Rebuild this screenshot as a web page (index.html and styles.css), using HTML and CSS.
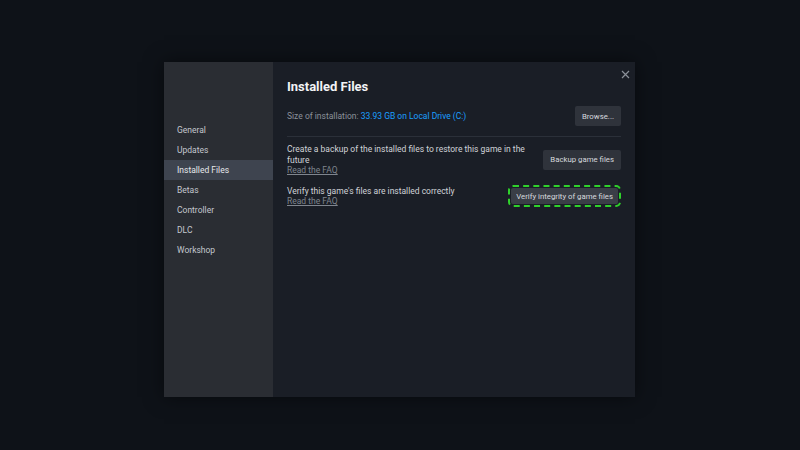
FILE: index.html
```html
<!DOCTYPE html>
<html lang="en">
<head>
  <meta charset="UTF-8" />
  <title>Properties - Installed Files</title>
  <link rel="stylesheet" href="styles.css">
</head>
<body>
  <div class="dialog">
    <nav class="sidebar">
      <div class="nav-item">General</div>
      <div class="nav-item">Updates</div>
      <div class="nav-item active">Installed Files</div>
      <div class="nav-item">Betas</div>
      <div class="nav-item">Controller</div>
      <div class="nav-item">DLC</div>
      <div class="nav-item">Workshop</div>
    </nav>
    <main class="content">
      <button class="close" aria-label="Close">
        <svg width="9" height="9" viewBox="0 0 9 9"><path d="M1 1L8 8M8 1L1 8" stroke="#8b9099" stroke-width="1.2"/></svg>
      </button>
      <h1>Installed Files</h1>
      <div class="row size-row">
        <div class="size">Size of installation: <span class="link">33.93 GB on Local Drive (C:)</span></div>
        <button class="btn">Browse...</button>
      </div>
      <div class="row">
        <div class="desc">
          <p>Create a backup of the installed files to restore this game in the future</p>
          <a class="faq" href="#">Read the FAQ</a>
        </div>
        <button class="btn">Backup game files</button>
      </div>
      <div class="row">
        <div class="desc">
          <p>Verify this game's files are installed correctly</p>
          <a class="faq" href="#">Read the FAQ</a>
        </div>
        <button class="btn verify">Verify integrity of game files</button>
      </div>
    </main>
  </div>
</body>
</html>
```

FILE: styles.css
```css
body {
  margin: 0;
  height: 450px;
  box-sizing: border-box;
  padding: 62px 0 0 164px;
  background: #0e1218;
  font-family: Roboto, "Noto Sans", sans-serif;
  color: #c3c7ce;
}

.dialog {
  width: 471px;
  height: 335px;
  display: flex;
  background: #1a1e26;
  box-shadow: 0 0 18px rgba(0,0,0,0.5);
}

.sidebar {
  flex: 0 0 109px;
  background: #2a2d33;
  padding-top: 58px;
  box-sizing: border-box;
}

.nav-item {
  height: 20px;
  line-height: 20px;
  padding-left: 13px;
  font-size: 8.5px;
  color: #c3c7ce;
}

.nav-item.active {
  background: #3e444f;
  color: #e6e8eb;
}

.content {
  flex: 1;
  min-width: 0;
  position: relative;
  padding: 15px 14px 0 14px;
}

.close {
  position: absolute;
  top: 3px;
  right: 3px;
  background: none;
  border: none;
  padding: 2px;
  cursor: pointer;
}

h1 {
  margin: 0 0 9px;
  font-size: 13px;
  font-weight: 700;
  color: #f2f3f5;
  line-height: 20px;
}

.row {
  display: flex;
  justify-content: space-between;
  align-items: center;
  margin-bottom: 10px;
}

.size-row {
  padding-bottom: 10px;
  border-bottom: 1px solid #2b3039;
  margin-bottom: 7px;
}

.size {
  font-size: 8.5px;
  color: #8b919a;
}

.link {
  color: #1a9fff;
}

.desc {
  flex: 0 1 246px;
  font-size: 8.5px;
  line-height: 10.5px;
}

.desc p {
  margin: 0;
  color: #d0d3d8;
}

.faq {
  color: #7f858e;
  text-decoration: underline;
}

.btn {
  flex-shrink: 0;
  background: #2f333b;
  color: #d6d9de;
  border: none;
  border-radius: 2px;
  font-family: inherit;
  font-size: 7.8px;
  padding: 0 7px;
  height: 20px;
  white-space: nowrap;
}

.verify {
  outline: 2px dashed #2fd12b;
  outline-offset: 1px;
  background: #3a3e47;
  padding: 0 5px;
  height: 16px;
  margin-right: 3px;
}
```
